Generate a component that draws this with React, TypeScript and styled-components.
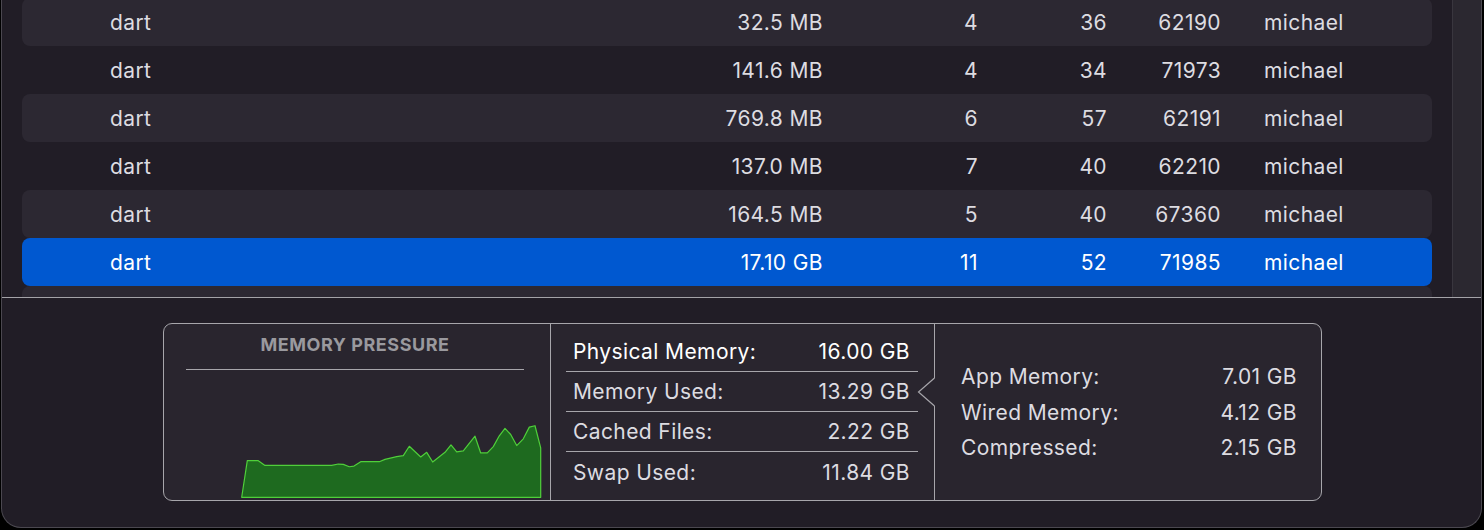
import React from 'react';
import styled, { createGlobalStyle } from 'styled-components';

const GlobalStyle = createGlobalStyle`
  *, *::before, *::after { box-sizing: border-box; }
  html, body { margin: 0; padding: 0; background: #000; }
  body {
    font-family: Inter, "Noto Sans", sans-serif;
    -webkit-font-smoothing: antialiased;
  }
`;

// process rows shown in the table
const processes = [
  { name: 'dart', mem: '32.5 MB', threads: '4', ports: '36', pid: '62190', user: 'michael' },
  { name: 'dart', mem: '141.6 MB', threads: '4', ports: '34', pid: '71973', user: 'michael' },
  { name: 'dart', mem: '769.8 MB', threads: '6', ports: '57', pid: '62191', user: 'michael' },
  { name: 'dart', mem: '137.0 MB', threads: '7', ports: '40', pid: '62210', user: 'michael' },
  { name: 'dart', mem: '164.5 MB', threads: '5', ports: '40', pid: '67360', user: 'michael' },
  { name: 'dart', mem: '17.10 GB', threads: '11', ports: '52', pid: '71985', user: 'michael' },
];

const memoryStats = [
  { label: 'Physical Memory:', value: '16.00 GB' },
  { label: 'Memory Used:', value: '13.29 GB' },
  { label: 'Cached Files:', value: '2.22 GB' },
  { label: 'Swap Used:', value: '11.84 GB' },
];

const breakdown = [
  { label: 'App Memory:', value: '7.01 GB' },
  { label: 'Wired Memory:', value: '4.12 GB' },
  { label: 'Compressed:', value: '2.15 GB' },
];

const chartPoints =
  '241.7,496.3 247.3,460 258.3,460 265,464.7 331.7,464.7 338.3,463.3 343.3,463.7 349.3,466 354,465.3 360.7,461 379.3,461 385,458.7 396.7,456 403.3,455 409.3,445.7 420.7,456.3 426.7,451.7 432.7,461.3 445,451.7 451,444.3 456.7,451.3 463.3,450.3 475,435.7 480.7,452.3 487.3,452.3 493.3,446 499.3,435.3 505,428 510.7,434 516.7,445 523.3,438.3 529.3,426.7 535,425.3 540.7,447.3 540.7,496.3';

const Window = styled.div`
  width: 1481px;
  height: 528px;
  margin-left: 1px;
  background: #211d26;
  border: 1px solid #4b4850;
  border-top: none;
  border-radius: 0 0 20px 20px;
  overflow: hidden;
  display: flex;
  flex-direction: column;
`;

const TableArea = styled.div`
  display: flex;
  height: 298px;
  flex-shrink: 0;
  border-bottom: 1px solid #a4a3a8;
  overflow: hidden;
`;

const RowList = styled.div`
  flex: 1;
  padding: 0 20px;
  margin-top: -2px;
`;

const Scrollbar = styled.div`
  width: 29px;
  background: #2b2830;
  border-left: 1px solid #39363e;
`;

const Row = styled.div<{ $striped?: boolean; $selected?: boolean }>`
  display: grid;
  grid-template-columns: 400px 313px 155px 129px 114px 1fr;
  align-items: center;
  height: 48px;
  padding-left: 88px;
  border-radius: 8px;
  font-size: 21px;
  letter-spacing: 0.4px;
  color: ${(p) => (p.$selected ? '#ffffff' : '#dddce1')};
  background: ${(p) => (p.$selected ? '#0058d0' : p.$striped ? '#2c2832' : 'transparent')};
`;

const Cell = styled.span<{ $right?: boolean }>`
  text-align: ${(p) => (p.$right ? 'right' : 'left')};
  white-space: nowrap;
`;

const UserCell = styled.span`
  padding-left: 43px;
  white-space: nowrap;
`;

const BottomPanel = styled.div`
  flex: 1;
  padding: 25px 0 0 161px;
`;

const Card = styled.div`
  display: flex;
  width: 1159px;
  height: 178px;
  background: #29252e;
  border: 1px solid #a7a6ab;
  border-radius: 9px;
`;

const PressureSection = styled.div`
  width: 387px;
  display: flex;
  flex-direction: column;
  border-right: 1px solid #a7a6ab;
`;

const PressureTitle = styled.div`
  margin: 11px 26px 0 22px;
  text-align: center;
  font-size: 18px;
  line-height: 20px;
  font-weight: 700;
  letter-spacing: 0.55px;
  color: #9a999e;
`;

const Rule = styled.div`
  height: 1px;
  margin: 14px 26px 0 22px;
  background: #a7a6ab;
`;

const Chart = styled.svg`
  display: block;
  flex: 1;
  width: 386px;
`;

const StatsSection = styled.div`
  position: relative;
  width: 384px;
  padding-top: 8px;
  border-right: 1px solid #a7a6ab;
`;

const StatRow = styled.div<{ $primary?: boolean }>`
  display: flex;
  justify-content: space-between;
  align-items: center;
  height: 40px;
  margin: 0 16px 0 15px;
  padding: 0 8px 0 7px;
  font-size: 21px;
  letter-spacing: 0.4px;
  color: ${(p) => (p.$primary ? '#ffffff' : '#dddce1')};
  &:not(:last-of-type) {
    border-bottom: 1px solid #a7a6ab;
  }
`;

const Notch = styled.svg`
  position: absolute;
  right: -1px;
  top: 54px;
  width: 18px;
  height: 28px;
  overflow: visible;
`;

const BreakdownSection = styled.div`
  flex: 1;
  display: flex;
  flex-direction: column;
  justify-content: center;
  padding: 0 24px 0 26px;
`;

const BreakdownRow = styled.div`
  display: flex;
  justify-content: space-between;
  align-items: center;
  height: 35.5px;
  font-size: 21px;
  letter-spacing: 0.4px;
  color: #dddce1;
`;

const App: React.FC = () => {
  return (
    <>
      <GlobalStyle />
      <Window>
        <TableArea>
          <RowList>
            {processes.map((p, i) => (
              <Row key={p.pid} $striped={i % 2 === 0} $selected={i === processes.length - 1}>
                <Cell>{p.name}</Cell>
                <Cell $right>{p.mem}</Cell>
                <Cell $right>{p.threads}</Cell>
                <Cell $right>{p.ports}</Cell>
                <Cell $right>{p.pid}</Cell>
                <UserCell>{p.user}</UserCell>
              </Row>
            ))}
            <Row $striped />
          </RowList>
          <Scrollbar />
        </TableArea>

        <BottomPanel>
          <Card>
            <PressureSection>
              <PressureTitle>MEMORY PRESSURE</PressureTitle>
              <Rule />
              <Chart viewBox="164 370 386 129" preserveAspectRatio="none">
                <polygon
                  points={chartPoints}
                  fill="#1e6a1f"
                  stroke="#4fcf3a"
                  strokeWidth="1.2"
                  strokeLinejoin="round"
                />
              </Chart>
            </PressureSection>

            <StatsSection>
              {memoryStats.map((s, i) => (
                <StatRow key={s.label} $primary={i === 0}>
                  <span>{s.label}</span>
                  <span>{s.value}</span>
                </StatRow>
              ))}
              <Notch viewBox="0 0 18 28">
                <polygon points="18,0 17.5,0 1.5,14 17.5,28 18,28" fill="#29252e" />
                <polyline points="17.5,0 1.5,14 17.5,28" fill="none" stroke="#a7a6ab" strokeWidth="1.2" />
              </Notch>
            </StatsSection>

            <BreakdownSection>
              {breakdown.map((b) => (
                <BreakdownRow key={b.label}>
                  <span>{b.label}</span>
                  <span>{b.value}</span>
                </BreakdownRow>
              ))}
            </BreakdownSection>
          </Card>
        </BottomPanel>
      </Window>
    </>
  );
};

export default App;
